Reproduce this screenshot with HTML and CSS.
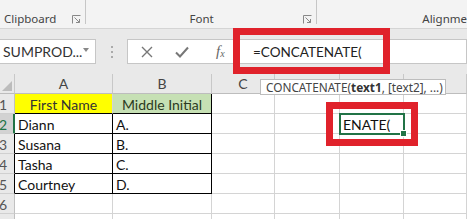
FILE: index.html
```html
<!DOCTYPE html>
<html lang="en">
<head>
	<meta charset="utf-8">
	<title>Excel - CONCATENATE</title>
	<link rel="stylesheet" href="styles.css">
</head>
<body>

<div class="ribbon">
    <div class="group clipboard">
        <span class="label">Clipboard</span>
        <svg class="launcher" width="9" height="9" viewBox="0 0 9 9"><path d="M0.5 8.5V0.5H8.5" fill="none" stroke="#888"/><path d="M2.5 2.5L7.5 7.5M4 7.5H7.5V4" fill="none" stroke="#888"/></svg>
    </div>
    <div class="group font">
        <span class="label">Font</span>
        <svg class="launcher" width="9" height="9" viewBox="0 0 9 9"><path d="M0.5 8.5V0.5H8.5" fill="none" stroke="#888"/><path d="M2.5 2.5L7.5 7.5M4 7.5H7.5V4" fill="none" stroke="#888"/></svg>
    </div>
    <div class="group align">
        <span class="label">Alignme</span>
    </div>
</div>

<div class="fbar">
    <div class="namebox">
        <span>SUMPROD...</span>
        <span class="arrow"></span>
    </div>
    <div class="grip"><i></i><i></i><i></i></div>
    <div class="buttons">
        <svg width="12" height="12" viewBox="0 0 12 12"><path d="M1 1L11 11M11 1L1 11" stroke="#777" stroke-width="1.4"/></svg>
        <svg width="14" height="12" viewBox="0 0 14 12"><path d="M1 6.5L5 10.5L13 1.5" fill="none" stroke="#777" stroke-width="2"/></svg>
        <span class="fx">f<sub>x</sub></span>
    </div>
    <div class="input">=CONCATENATE(</div>
</div>

<div class="grid">
    <div class="corner"></div>
    <div class="colhead">A</div>
    <div class="colhead">B</div>
    <div class="colhead">C</div>
    <div class="colhead"></div>
    <div class="colhead"></div>
    <div class="colhead"></div>

    <div class="rowhead">1</div>
    <div class="cell head yellow">First Name</div>
    <div class="cell head green">Middle Initial</div>
    <div class="cell"></div><div class="cell"></div><div class="cell"></div><div class="cell"></div>

    <div class="rowhead active">2</div>
    <div class="cell t">Diann</div>
    <div class="cell t">A.</div>
    <div class="cell"></div><div class="cell"></div>
    <div class="cell editing">ENATE(<span class="handle"></span></div>
    <div class="cell"></div>

    <div class="rowhead edge">3</div>
    <div class="cell t">Susana</div>
    <div class="cell t">B.</div>
    <div class="cell"></div><div class="cell"></div><div class="cell"></div><div class="cell"></div>

    <div class="rowhead edge">4</div>
    <div class="cell t">Tasha</div>
    <div class="cell t">C.</div>
    <div class="cell"></div><div class="cell"></div><div class="cell"></div><div class="cell"></div>

    <div class="rowhead edge">5</div>
    <div class="cell t">Courtney</div>
    <div class="cell t">D.</div>
    <div class="cell"></div><div class="cell"></div><div class="cell"></div><div class="cell"></div>

    <div class="rowhead">6</div>
    <div class="cell"></div><div class="cell"></div><div class="cell"></div><div class="cell"></div><div class="cell"></div><div class="cell"></div>

    <div class="rowhead"></div>
    <div class="cell"></div><div class="cell"></div><div class="cell"></div><div class="cell"></div><div class="cell"></div><div class="cell"></div>
</div>

<!-- tooltip and annotation boxes drawn over the sheet -->
<div class="tip">CONCATENATE(<b>text1</b>, [text2], ...)</div>
<div class="mark mark-formula"></div>
<div class="mark mark-cell"></div>

</body>
</html>
```

FILE: styles.css
```css
html, body { margin: 0; padding: 0; }
body {
    width: 467px; height: 219px;
    overflow: hidden;
    position: relative;
    background: #fff;
    font-family: Lato, "Liberation Sans", sans-serif;
}

/* ribbon */
.ribbon {
    display: flex;
    height: 28px;
    background: #f3f3f3;
    border-bottom: 1px solid #d4d4d4;
    font-family: "Noto Sans", sans-serif;
    font-size: 11.5px;
    color: #444;
}
.ribbon .group {
    position: relative;
    display: flex;
    align-items: flex-end;
    box-sizing: border-box;
    height: 28px;
    padding-bottom: 2px;
    line-height: 14px;
}
.ribbon .group::after {
    content: "";
    position: absolute;
    right: 0; top: 0;
    width: 1px; height: 24px;
    background: #c6c6c6;
}
.ribbon .clipboard { width: 86px; padding-left: 4px; }
.ribbon .font { width: 232px; justify-content: center; }
.ribbon .align { flex: 1; padding-left: 105px; white-space: nowrap; }
.ribbon .align::after { display: none; }
.ribbon .launcher { position: absolute; right: 5px; bottom: 4px; }

/* formula bar */
.fbar {
    display: flex;
    align-items: center;
    height: 45px;
    background: #e9e9e9;
}
.namebox {
    width: 96px; height: 25px;
    box-sizing: border-box;
    background: #fff;
    border: 1px solid #c6c6c6;
    border-left: 0;
    display: flex;
    align-items: center;
    justify-content: space-between;
    padding: 0 6px 0 3px;
    font-size: 14px;
    color: #333;
}
.namebox .arrow {
    width: 0; height: 0;
    border-left: 3.5px solid transparent;
    border-right: 3.5px solid transparent;
    border-top: 4px solid #888;
    margin-top: -3px;
}
.grip {
    width: 31px;
    display: flex;
    flex-direction: column;
    align-items: center;
    gap: 3px;
}
.grip i { width: 2px; height: 2px; background: #aaa; }
.buttons {
    width: 112px; height: 25px;
    box-sizing: border-box;
    background: #fff;
    border: 1px solid #c6c6c6;
    border-right: 0;
    display: flex;
    align-items: center;
    padding-left: 13px;
    gap: 22px;
}
.buttons .fx {
    font-family: "Liberation Serif", serif;
    font-style: italic;
    font-size: 15px;
    color: #666;
    margin-left: 5px;
}
.buttons .fx sub { font-size: 10px; vertical-align: -1px; }
.input {
    flex: 1; height: 25px;
    box-sizing: border-box;
    background: #fff;
    border: 1px solid #c6c6c6;
    border-left: 0;
    padding-left: 14px;
    font-size: 13.5px;
    line-height: 24px;
    color: #222;
}

/* sheet */
.grid {
    display: grid;
    grid-template-columns: 15px 98px 99px 63px 65px 64px 63px;
    grid-auto-rows: 20px;
    font-size: 14px;
}
.grid > div { box-sizing: border-box; }
.corner {
    background: #e9e9e9;
    border-right: 1px solid #c8c8c8;
    border-bottom: 1px solid #bdbdbd;
    position: relative;
}
.corner::after {
    content: "";
    position: absolute;
    right: 2px; bottom: 2px;
    border-left: 10px solid transparent;
    border-bottom: 10px solid #bcbcbc;
}
.colhead {
    background: #e9e9e9;
    border-right: 1px solid #c8c8c8;
    border-bottom: 1px solid #bdbdbd;
    text-align: center;
    line-height: 20px;
    color: #444;
}
.rowhead {
    background: #e9e9e9;
    border-right: 1px solid #c0c0c0;
    border-bottom: 1px solid #d0d0d0;
    line-height: 21px;
    text-indent: -1px;
    color: #555;
    overflow: hidden;
}
.rowhead.active { background: #d2d2d2; border-right: 2px solid #217346; color: #217346; }
.rowhead.edge { border-right-color: #000; }
.cell {
    border-right: 1px solid #d4d4d4;
    border-bottom: 1px solid #d4d4d4;
    line-height: 21px;
    padding-left: 3px;
    white-space: nowrap;
    color: #111;
}
.cell.head { text-align: center; padding-left: 0; border-bottom-color: #000; color: #2b3a22; }
.cell.yellow { background: #ffff00; color: #333; }
.cell.green { background: #c6e0b4; border-right-color: #000; }
.cell.t { border-right-color: #000; border-bottom-color: #000; }
.cell.editing {
    position: relative;
    border: 2px solid #217346;
    margin: -1px 0 0 -1px;
    width: 66px;
    height: 22px;
    line-height: 19px;
    padding-left: 2px;
}
.cell.editing .handle {
    position: absolute;
    right: -4px; bottom: -4px;
    width: 5px; height: 5px;
    background: #217346;
    border: 1px solid #fff;
}

/* overlays */
.tip {
    position: absolute;
    left: 260px; top: 79px;
    width: 186px; height: 16px;
    box-sizing: border-box;
    background: #fff;
    border: 1px solid #bdbdbd;
    padding-left: 5px;
    font-family: "Noto Sans", sans-serif;
    font-size: 11.8px;
    line-height: 14px;
    color: #444;
    white-space: nowrap;
}
.tip b { color: #333; }
.mark {
    position: absolute;
    box-sizing: border-box;
    border: 7px solid #e0222b;
}
.mark-formula { left: 233px; top: 28px; width: 157px; height: 46px; }
.mark-cell { left: 326px; top: 102px; width: 92px; height: 44px; }
```
